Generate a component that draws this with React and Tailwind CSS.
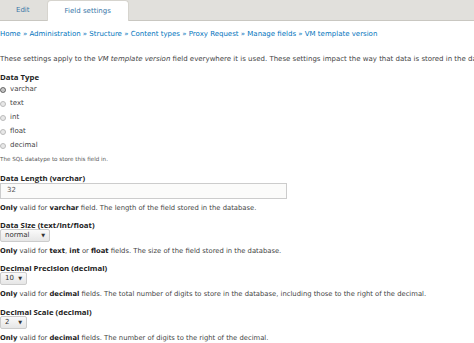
export default function App() {
  const font = { fontFamily: '"DejaVu Sans", Verdana, sans-serif' };
  const boldFont = { fontFamily: '"Open Sans", "DejaVu Sans", sans-serif' };
  const radios = ["varchar", "text", "int", "float", "decimal"];
  const label = "font-bold text-[#222] text-[7.8px] leading-[8px]";
  const help = "pt-[6px] text-[#444] text-[6.8px] whitespace-nowrap";
  const select =
    "h-[13px] border border-[#ccc] rounded-[2px] bg-gradient-to-b from-[#fafafa] to-[#e6e6e6] flex items-center justify-between px-[4px] text-[#333]";
  const B = ({ children }) => (
    <b className="text-[#222]" style={{ fontFamily: '"DejaVu Sans", sans-serif' }}>
      {children}
    </b>
  );
  return (
    <div className="w-[474px] h-[343px] overflow-hidden bg-white text-[#333] text-[7px] leading-none" style={font}>
      <div className="h-[21px] bg-[#e1e0dc] border-b border-[#c9c7c1] flex items-end pl-[5px] gap-[6px]">
        <div className="h-[20px] px-[11px] flex items-center text-[#3a77a8]">Edit</div>
        <div className="h-[21px] -mb-px px-[17px] flex items-center bg-white rounded-t-[4px] text-[#3a77a8] border border-b-0 border-[#d6d4ce]">
          Field settings
        </div>
      </div>

      <div className="pt-[10px] text-[#0074bd] whitespace-nowrap">
        Home » Administration » Structure » Content types » Proxy Request » Manage fields » VM template version
      </div>

      <div className="pt-[18px] whitespace-nowrap text-[#444]">
        These settings apply to the <em>VM template version</em> field everywhere it is used. These settings impact the way that data is stored in the database and cannot be changed.
      </div>

      <div className={`pt-[10px] ${label}`} style={boldFont}>Data Type</div>
      <div className="flex flex-col gap-[7px] pt-[5px]">
        {radios.map((r, i) => (
          <label key={r} className="flex items-center gap-[4px] text-[#444]">
            <span
              className={`w-[6px] h-[6px] rounded-full border ${
                i === 0 ? "border-[#777] bg-[#555] shadow-[inset_0_0_0_1.5px_#ddd]" : "border-[#bbb] bg-[#e8e8e8]"
              }`}
            />
            {r}
          </label>
        ))}
      </div>
      <div className="pt-[8px] text-[5.6px] text-[#555]">The SQL datatype to store this field in.</div>

      <div className={`pt-[11px] ${label}`} style={boldFont}>Data Length (varchar)</div>
      <div className="pt-[1px]">
        <div className="w-[287px] h-[16px] border border-[#ccc] bg-[#fbfbfa] flex items-center pl-[6px] text-[#555]">32</div>
      </div>
      <div className={help}>
        <B>Only</B> valid for <B>varchar</B> field. The length of the field stored in the database.
      </div>

      <div className={`pt-[10px] ${label}`} style={boldFont}>Data Size (text/int/float)</div>
      <div>
        <div className={`w-[50px] ${select}`}>
          normal <span className="text-[5px]">▼</span>
        </div>
      </div>
      <div className={help}>
        <B>Only</B> valid for <B>text</B>, <B>int</B> or <B>float</B> fields. The size of the field stored in the database.
      </div>

      <div className={`pt-[9px] ${label}`} style={boldFont}>Decimal Precision (decimal)</div>
      <div>
        <div className={`w-[27px] ${select}`}>
          10 <span className="text-[5px]">▼</span>
        </div>
      </div>
      <div className={help}>
        <B>Only</B> valid for <B>decimal</B> fields. The total number of digits to store in the database, including those to the right of the decimal.
      </div>

      <div className={`pt-[10px] ${label}`} style={boldFont}>Decimal Scale (decimal)</div>
      <div>
        <div className={`w-[27px] ${select}`}>
          2 <span className="text-[5px]">▼</span>
        </div>
      </div>
      <div className={help}>
        <B>Only</B> valid for <B>decimal</B> fields. The number of digits to the right of the decimal.
      </div>
    </div>
  );
}
